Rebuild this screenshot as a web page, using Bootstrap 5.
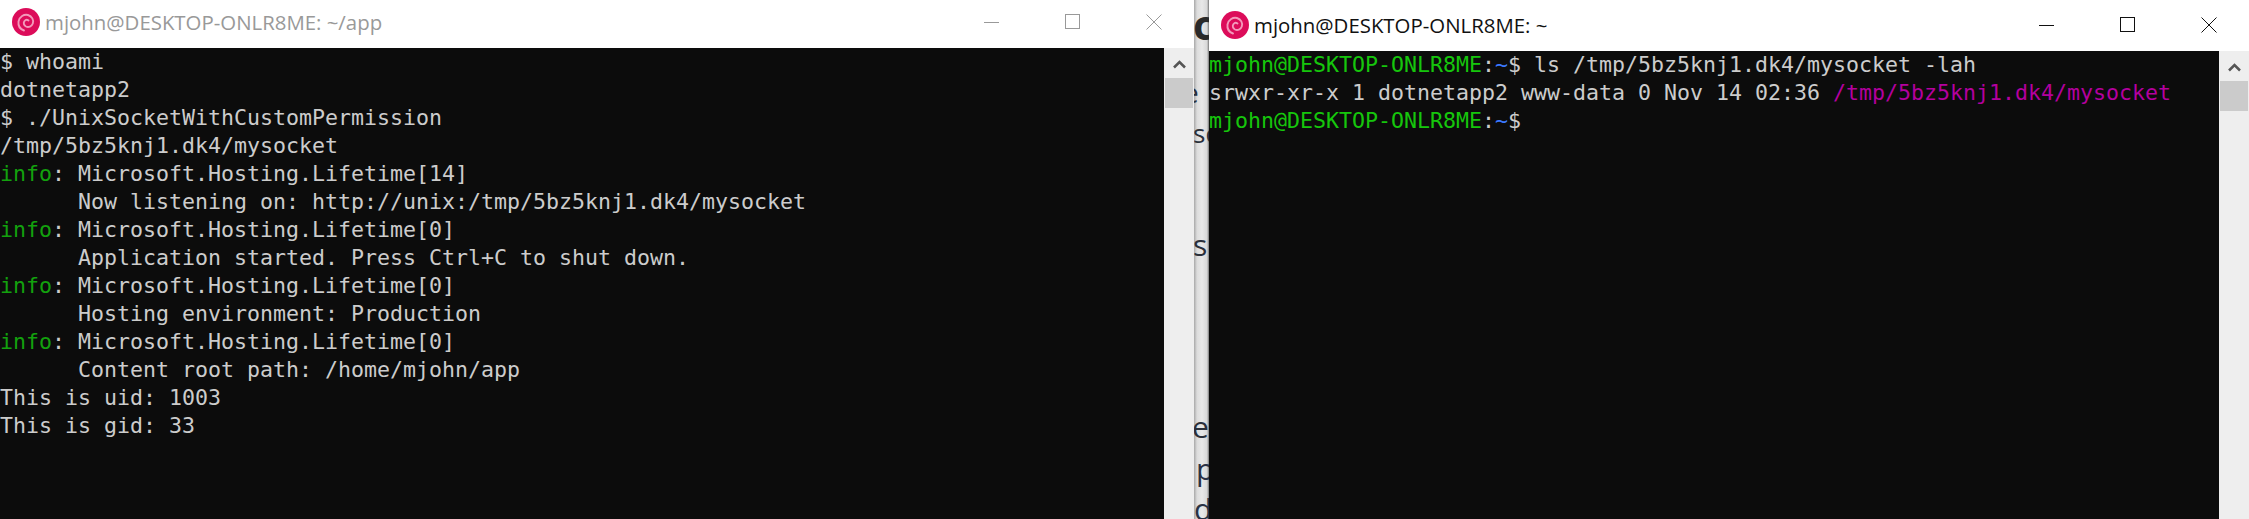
<!DOCTYPE html>
<html lang="en">
<head>
<meta charset="utf-8">
<title>Terminals</title>
<link href="https://cdn.jsdelivr.net/npm/bootstrap@5.3.0/dist/css/bootstrap.min.css" rel="stylesheet">
<style>
html,body{height:519px;overflow:hidden;margin:0;background:#0c0c0c}
.desk{height:519px;width:2249px}
.win-left{width:1194px}
.win-right{width:1040px}
.gutter{width:15px;position:relative;overflow:hidden;background:linear-gradient(90deg,#a8a8a8 0,#dcdcdc 3px,#e8e8e8 8px,#d8d8d8 13px,#777 15px);font-family:"Open Sans",sans-serif;color:#2a2f3a}
.gutter span{position:absolute;line-height:1;font-size:28px}
.gutter .l1{left:-1px;top:3px;font-size:42px;font-weight:700;color:#2a2a2a}
.gutter .l2{left:-11px;top:78px}
.gutter .l3{left:-1px;top:120px;font-size:26px}
.gutter .l4{left:-1px;top:230px;font-size:30px}
.gutter .l5{left:-2px;top:412px;font-size:30px}
.gutter .l6{left:2px;top:454px;font-size:30px;color:#2a3245}
.gutter .l7{left:0;top:494px;font-size:30px;color:#2a3245}
.tbar{background:#fff;font-family:"Open Sans",sans-serif;font-size:20.4px;white-space:nowrap;flex:none;padding-left:12px}
.win-left .tbar{height:48px;color:#999;padding-bottom:4px}
.win-right .tbar{height:51px;color:#111;padding-bottom:1px}
.tbar .ttl{margin-left:5px}
.ctrls{margin-left:auto;display:flex}
.ctrl{width:81px;height:30px;display:flex;align-items:center;justify-content:center}
.ctrl svg{fill:none}
.win-left .ctrl svg{stroke:#999}
.win-right .ctrl svg{stroke:#111}
.body-row{min-height:0}
.term{background:#0c0c0c;color:#ccc;font-family:"DejaVu Sans Mono",monospace;font-size:21.6px;line-height:28px;overflow:hidden}
.term div{white-space:pre;height:28px}
.g{color:#13a10e}.gb{color:#16c60c}.b{color:#3b78ff}.m{color:#b4009e}
.sbar{width:30px;background:#eee;padding-top:12px;flex:none}
.arrow{display:block;margin:0 auto 9px}
.thumb{height:30px;margin:0 1px;background:#cbcbcb}
</style>
</head>
<body>
<div class="desk d-flex">
  <div class="win-left d-flex flex-column">
    <div class="tbar d-flex align-items-center">
      <svg width="28" height="28" viewBox="0 0 28 28"><circle cx="14" cy="14" r="14" fill="#dc0c5a"/><path d="M12 22.500C8 21 6 17.500 6.500 13.500 7.500 8.500 12 6 16 7c4 1.200 6 5 4.800 8.500-1 3-4.300 4.200-6.800 3-2.300-1.200-2.800-3.800-1.500-5.500 1-1.300 2.800-1.500 4-.6" fill="none" stroke="#f39abb" stroke-width="1.900" stroke-linecap="round"/></svg>
      <span class="ttl">mjohn@DESKTOP-ONLR8ME: ~/app</span>
      <div class="ctrls">
        <div class="ctrl"><svg width="16" height="16" viewBox="0 0 16 16"><path d="M0 8.500h15"/></svg></div>
        <div class="ctrl"><svg width="16" height="16" viewBox="0 0 16 16"><rect x=".5" y=".5" width="14" height="14"/></svg></div>
        <div class="ctrl"><svg width="16" height="16" viewBox="0 0 16 16"><path d="M.5.5l15 15M15.500.5l-15 15"/></svg></div>
      </div>
    </div>
    <div class="d-flex flex-grow-1 body-row">
      <div class="term flex-grow-1">
        <div>$ whoami</div>
        <div>dotnetapp2</div>
        <div>$ ./UnixSocketWithCustomPermission</div>
        <div>/tmp/5bz5knj1.dk4/mysocket</div>
        <div><span class="g">info</span>: Microsoft.Hosting.Lifetime[14]</div>
        <div>      Now listening on: http://unix:/tmp/5bz5knj1.dk4/mysocket</div>
        <div><span class="g">info</span>: Microsoft.Hosting.Lifetime[0]</div>
        <div>      Application started. Press Ctrl+C to shut down.</div>
        <div><span class="g">info</span>: Microsoft.Hosting.Lifetime[0]</div>
        <div>      Hosting environment: Production</div>
        <div><span class="g">info</span>: Microsoft.Hosting.Lifetime[0]</div>
        <div>      Content root path: /home/mjohn/app</div>
        <div>This is uid: 1003</div>
        <div>This is gid: 33</div>
      </div>
      <div class="sbar"><svg class="arrow" width="13" height="9" viewBox="0 0 13 9"><path d="M1 7.500l5.500-5.500 5.500 5.500" fill="none" stroke="#555" stroke-width="2.500"/></svg><div class="thumb"></div></div>
    </div>
  </div>
  <div class="gutter">
    <span class="l1">c</span>
    <span class="l2">e</span>
    <span class="l3">sc</span>
    <span class="l4">s</span>
    <span class="l5">e</span>
    <span class="l6">p</span>
    <span class="l7">d</span>
  </div>
  <div class="win-right d-flex flex-column">
    <div class="tbar d-flex align-items-center">
      <svg width="28" height="28" viewBox="0 0 28 28"><circle cx="14" cy="14" r="14" fill="#dc0c5a"/><path d="M12 22.500C8 21 6 17.500 6.500 13.500 7.500 8.500 12 6 16 7c4 1.200 6 5 4.800 8.500-1 3-4.300 4.200-6.800 3-2.300-1.200-2.800-3.800-1.500-5.500 1-1.300 2.800-1.500 4-.6" fill="none" stroke="#f39abb" stroke-width="1.900" stroke-linecap="round"/></svg>
      <span class="ttl">mjohn@DESKTOP-ONLR8ME: ~</span>
      <div class="ctrls">
        <div class="ctrl"><svg width="16" height="16" viewBox="0 0 16 16"><path d="M0 8.500h15"/></svg></div>
        <div class="ctrl"><svg width="16" height="16" viewBox="0 0 16 16"><rect x=".5" y=".5" width="14" height="14"/></svg></div>
        <div class="ctrl"><svg width="16" height="16" viewBox="0 0 16 16"><path d="M.5.5l15 15M15.500.5l-15 15"/></svg></div>
      </div>
    </div>
    <div class="d-flex flex-grow-1 body-row">
      <div class="term flex-grow-1">
        <div><span class="gb">mjohn@DESKTOP-ONLR8ME</span>:<span class="b">~</span>$ ls /tmp/5bz5knj1.dk4/mysocket -lah</div>
        <div>srwxr-xr-x 1 dotnetapp2 www-data 0 Nov 14 02:36 <span class="m">/tmp/5bz5knj1.dk4/mysocket</span></div>
        <div><span class="gb">mjohn@DESKTOP-ONLR8ME</span>:<span class="b">~</span>$</div>
      </div>
      <div class="sbar"><svg class="arrow" width="13" height="9" viewBox="0 0 13 9"><path d="M1 7.500l5.500-5.500 5.500 5.500" fill="none" stroke="#555" stroke-width="2.500"/></svg><div class="thumb"></div></div>
    </div>
  </div>
</div>
<script src="https://cdn.jsdelivr.net/npm/bootstrap@5.3.0/dist/js/bootstrap.bundle.min.js"></script>
</body>
</html>
